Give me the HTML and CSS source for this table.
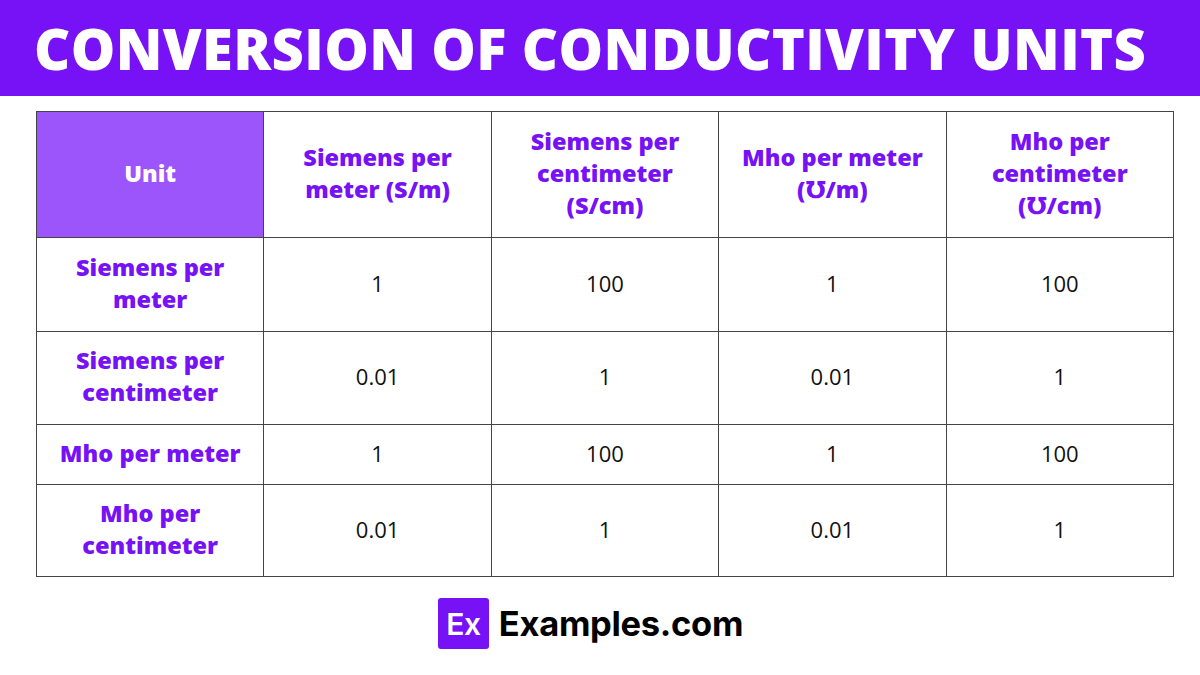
FILE: index.html
```html
<!DOCTYPE html>
<html lang="en">
<head>
<meta charset="utf-8">
<title>Conversion of Conductivity Units</title>
<link rel="stylesheet" href="styles.css">
</head>
<body>
<header class="banner">
  <h1 class="title">CONVERSION OF CONDUCTIVITY UNITS</h1>
</header>
<main class="content">
  <table class="units">
    <thead>
      <tr class="row-head">
        <th class="corner">Unit</th>
        <th>Siemens per<br>meter (S/m)</th>
        <th>Siemens per<br>centimeter<br>(S/cm)</th>
        <th>Mho per meter<br>(℧/m)</th>
        <th>Mho per<br>centimeter<br>(℧/cm)</th>
      </tr>
    </thead>
    <tbody>
      <tr class="row-a">
        <th>Siemens per<br>meter</th>
        <td>1</td><td>100</td><td>1</td><td>100</td>
      </tr>
      <tr class="row-b">
        <th>Siemens per<br>centimeter</th>
        <td>0.01</td><td>1</td><td>0.01</td><td>1</td>
      </tr>
      <tr class="row-c">
        <th>Mho per meter</th>
        <td>1</td><td>100</td><td>1</td><td>100</td>
      </tr>
      <tr class="row-d">
        <th>Mho per<br>centimeter</th>
        <td>0.01</td><td>1</td><td>0.01</td><td>1</td>
      </tr>
    </tbody>
  </table>
</main>
<footer class="brand">
  <span class="brand-mark">Ex</span>
  <span class="brand-name">Examples.com</span>
</footer>
</body>
</html>
```

FILE: styles.css
```css
* { box-sizing: border-box; }
html, body { margin: 0; padding: 0; }
body {
  width: 1200px;
  height: 675px;
  background: #ffffff;
  font-family: "Open Sans", "DejaVu Sans", sans-serif;
  overflow: hidden;
}
.banner {
  height: 96px;
  background: #7612f5;
  display: flex;
  align-items: center;
  padding-left: 34px;
}
.title {
  margin: 0;
  color: #ffffff;
  font-family: "Open Sans", sans-serif;
  font-weight: 800;
  font-size: 56px;
  line-height: 1;
  letter-spacing: 0.4px;
  white-space: nowrap;
}
.content {
  padding: 15px 0 0 36px;
}
.units {
  width: 1138px;
  border-collapse: collapse;
  table-layout: fixed;
}
.units th, .units td {
  border: 1.5px solid #444444;
  text-align: center;
  vertical-align: middle;
  padding: 0 4px 4px;
  line-height: 32px;
}
.units th {
  color: #7612f5;
  font-weight: 800;
  font-size: 23.5px;
}
.units td {
  color: #111111;
  font-weight: 400;
  font-size: 22px;
}
.units .corner {
  background: #9b55fa;
  color: #ffffff;
}
.row-head { height: 126px; }
.row-a { height: 94px; }
.row-b { height: 93px; }
.row-c { height: 60px; }
.row-d { height: 92px; }
.brand {
  display: flex;
  align-items: center;
  justify-content: center;
  gap: 10px;
  margin-top: 21px;
  padding-right: 19px;
}
.brand-mark {
  width: 51px;
  height: 51px;
  border-radius: 3px;
  background: #7612f5;
  color: #ffffff;
  font-family: "Inter", sans-serif;
  font-weight: 600;
  font-size: 30px;
  display: flex;
  align-items: center;
  justify-content: center;
  letter-spacing: -0.5px;
}
.brand-name {
  font-family: "Inter", sans-serif;
  font-weight: 700;
  font-size: 34.5px;
  color: #000000;
  letter-spacing: -0.3px;
}
```
